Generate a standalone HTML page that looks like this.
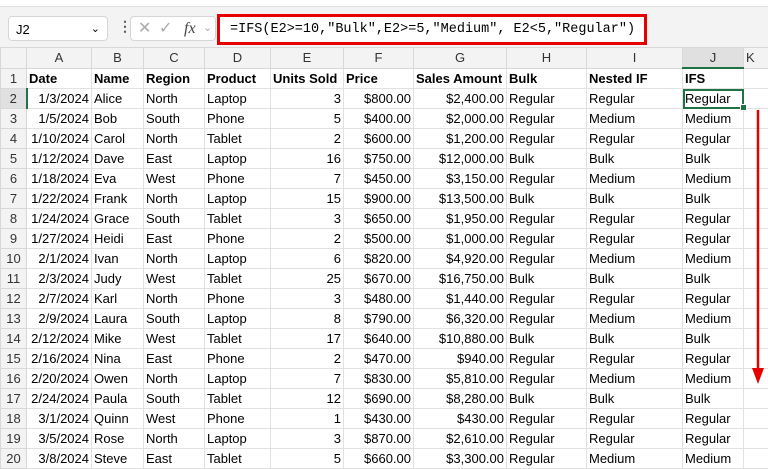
<!DOCTYPE html>
<html><head><meta charset="utf-8"><style>
body{margin:0;width:768px;height:464px;overflow:hidden;background:#fff;font-family:"Liberation Sans",sans-serif;position:relative}
.top{position:absolute;left:0;top:0;width:768px;height:47px;background:#f3f3f3}
.rib{position:absolute;left:0;top:0;width:768px;height:6px;background:#fff;border-bottom:1px solid #e0e0e0}
.nb{position:absolute;left:8px;top:16px;width:100px;height:25px;background:#fff;border:1px solid #d6d6d6;border-radius:4px;font-size:13px;line-height:25px;box-sizing:border-box;padding-left:7px}
.fx{position:absolute;left:130px;top:16px;width:86px;height:25px;background:#fff;border:1px solid #d6d6d6;border-radius:4px;box-sizing:border-box;color:#aaa;font-size:16px;line-height:23px}
.fb{position:absolute;left:217px;top:14px;width:430px;height:31px;border:3px solid #e60000;box-sizing:border-box;background:#fff;font-family:"Liberation Mono",monospace;font-size:13.5px;line-height:25px;padding-left:10px;white-space:pre}
table{position:absolute;left:0;top:47px;width:773px;border-collapse:collapse;table-layout:fixed;font-size:13px}
td{height:19px;border:1px solid #e1e1e1;padding:0 2px;white-space:nowrap;overflow:hidden;line-height:19px}
tr.h td{background:#f3f3f3;text-align:center;color:#333;border-color:#d8d8d8}
td.r{background:#f3f3f3;text-align:center;color:#333;border-color:#d8d8d8}
tr.b td{font-weight:bold}
td.n{text-align:right}
</style></head><body>
<div class="top"><div class="rib"></div>
<div class="nb">J2<span style="position:absolute;right:7px;top:0;font-size:11px">&#8964;</span></div>
<div style="position:absolute;left:118px;top:18px;font-size:14px;color:#555;font-weight:bold">&#8942;</div>
<div class="fx"><span style="position:absolute;left:7px">&#10005;</span><span style="position:absolute;left:28px">&#10003;</span><span style="position:absolute;left:53px;color:#444;font-style:italic;font-family:'Liberation Serif',serif">fx</span><span style="position:absolute;left:72px;font-size:11px">&#8964;</span></div>
<div class="fb">=IFS(E2&gt;=10,"Bulk",E2&gt;=5,"Medium", E2&lt;5,"Regular")</div>
</div>
<table>
<colgroup><col style="width:26px"><col style="width:65px"><col style="width:52px"><col style="width:61px"><col style="width:66px"><col style="width:73px"><col style="width:70px"><col style="width:93px"><col style="width:80px"><col style="width:96px"><col style="width:61px"><col style="width:30px"></colgroup>
<tr class="h"><td></td><td>A</td><td>B</td><td>C</td><td>D</td><td>E</td><td>F</td><td>G</td><td>H</td><td>I</td><td style="background:#e0e0e0;border-bottom:2px solid #217346">J</td><td style="text-align:left">K</td></tr>
<tr class="b"><td class="r" style="font-weight:normal">1</td><td>Date</td><td>Name</td><td>Region</td><td>Product</td><td>Units Sold</td><td>Price</td><td>Sales Amount</td><td>Bulk</td><td>Nested IF</td><td>IFS</td><td></td></tr>
<tr><td class="r" style="background:#e0e0e0;border-right:2px solid #217346">2</td><td class="n">1/3/2024</td><td>Alice</td><td>North</td><td>Laptop</td><td class="n">3</td><td class="n">$800.00</td><td class="n">$2,400.00</td><td>Regular</td><td>Regular</td><td style="outline:2px solid #217346;outline-offset:-2px">Regular</td><td></td></tr>
<tr><td class="r">3</td><td class="n">1/5/2024</td><td>Bob</td><td>South</td><td>Phone</td><td class="n">5</td><td class="n">$400.00</td><td class="n">$2,000.00</td><td>Regular</td><td>Medium</td><td>Medium</td><td></td></tr>
<tr><td class="r">4</td><td class="n">1/10/2024</td><td>Carol</td><td>North</td><td>Tablet</td><td class="n">2</td><td class="n">$600.00</td><td class="n">$1,200.00</td><td>Regular</td><td>Regular</td><td>Regular</td><td></td></tr>
<tr><td class="r">5</td><td class="n">1/12/2024</td><td>Dave</td><td>East</td><td>Laptop</td><td class="n">16</td><td class="n">$750.00</td><td class="n">$12,000.00</td><td>Bulk</td><td>Bulk</td><td>Bulk</td><td></td></tr>
<tr><td class="r">6</td><td class="n">1/18/2024</td><td>Eva</td><td>West</td><td>Phone</td><td class="n">7</td><td class="n">$450.00</td><td class="n">$3,150.00</td><td>Regular</td><td>Medium</td><td>Medium</td><td></td></tr>
<tr><td class="r">7</td><td class="n">1/22/2024</td><td>Frank</td><td>North</td><td>Laptop</td><td class="n">15</td><td class="n">$900.00</td><td class="n">$13,500.00</td><td>Bulk</td><td>Bulk</td><td>Bulk</td><td></td></tr>
<tr><td class="r">8</td><td class="n">1/24/2024</td><td>Grace</td><td>South</td><td>Tablet</td><td class="n">3</td><td class="n">$650.00</td><td class="n">$1,950.00</td><td>Regular</td><td>Regular</td><td>Regular</td><td></td></tr>
<tr><td class="r">9</td><td class="n">1/27/2024</td><td>Heidi</td><td>East</td><td>Phone</td><td class="n">2</td><td class="n">$500.00</td><td class="n">$1,000.00</td><td>Regular</td><td>Regular</td><td>Regular</td><td></td></tr>
<tr><td class="r">10</td><td class="n">2/1/2024</td><td>Ivan</td><td>North</td><td>Laptop</td><td class="n">6</td><td class="n">$820.00</td><td class="n">$4,920.00</td><td>Regular</td><td>Medium</td><td>Medium</td><td></td></tr>
<tr><td class="r">11</td><td class="n">2/3/2024</td><td>Judy</td><td>West</td><td>Tablet</td><td class="n">25</td><td class="n">$670.00</td><td class="n">$16,750.00</td><td>Bulk</td><td>Bulk</td><td>Bulk</td><td></td></tr>
<tr><td class="r">12</td><td class="n">2/7/2024</td><td>Karl</td><td>North</td><td>Phone</td><td class="n">3</td><td class="n">$480.00</td><td class="n">$1,440.00</td><td>Regular</td><td>Regular</td><td>Regular</td><td></td></tr>
<tr><td class="r">13</td><td class="n">2/9/2024</td><td>Laura</td><td>South</td><td>Laptop</td><td class="n">8</td><td class="n">$790.00</td><td class="n">$6,320.00</td><td>Regular</td><td>Medium</td><td>Medium</td><td></td></tr>
<tr><td class="r">14</td><td class="n">2/12/2024</td><td>Mike</td><td>West</td><td>Tablet</td><td class="n">17</td><td class="n">$640.00</td><td class="n">$10,880.00</td><td>Bulk</td><td>Bulk</td><td>Bulk</td><td></td></tr>
<tr><td class="r">15</td><td class="n">2/16/2024</td><td>Nina</td><td>East</td><td>Phone</td><td class="n">2</td><td class="n">$470.00</td><td class="n">$940.00</td><td>Regular</td><td>Regular</td><td>Regular</td><td></td></tr>
<tr><td class="r">16</td><td class="n">2/20/2024</td><td>Owen</td><td>North</td><td>Laptop</td><td class="n">7</td><td class="n">$830.00</td><td class="n">$5,810.00</td><td>Regular</td><td>Medium</td><td>Medium</td><td></td></tr>
<tr><td class="r">17</td><td class="n">2/24/2024</td><td>Paula</td><td>South</td><td>Tablet</td><td class="n">12</td><td class="n">$690.00</td><td class="n">$8,280.00</td><td>Bulk</td><td>Bulk</td><td>Bulk</td><td></td></tr>
<tr><td class="r">18</td><td class="n">3/1/2024</td><td>Quinn</td><td>West</td><td>Phone</td><td class="n">1</td><td class="n">$430.00</td><td class="n">$430.00</td><td>Regular</td><td>Regular</td><td>Regular</td><td></td></tr>
<tr><td class="r">19</td><td class="n">3/5/2024</td><td>Rose</td><td>North</td><td>Laptop</td><td class="n">3</td><td class="n">$870.00</td><td class="n">$2,610.00</td><td>Regular</td><td>Regular</td><td>Regular</td><td></td></tr>
<tr><td class="r">20</td><td class="n">3/8/2024</td><td>Steve</td><td>East</td><td>Tablet</td><td class="n">5</td><td class="n">$660.00</td><td class="n">$3,300.00</td><td>Regular</td><td>Medium</td><td>Medium</td><td></td></tr>
</table>
<div style="position:absolute;left:740px;top:104px;width:5px;height:5px;background:#217346;border:1px solid #fff"></div>
<svg style="position:absolute;left:0;top:0" width="768" height="464"><line x1="758" y1="110" x2="758" y2="372" stroke="#e60000" stroke-width="2.5"/><polygon points="752,368 764,368 758,384" fill="#e60000"/></svg>
</body></html>
